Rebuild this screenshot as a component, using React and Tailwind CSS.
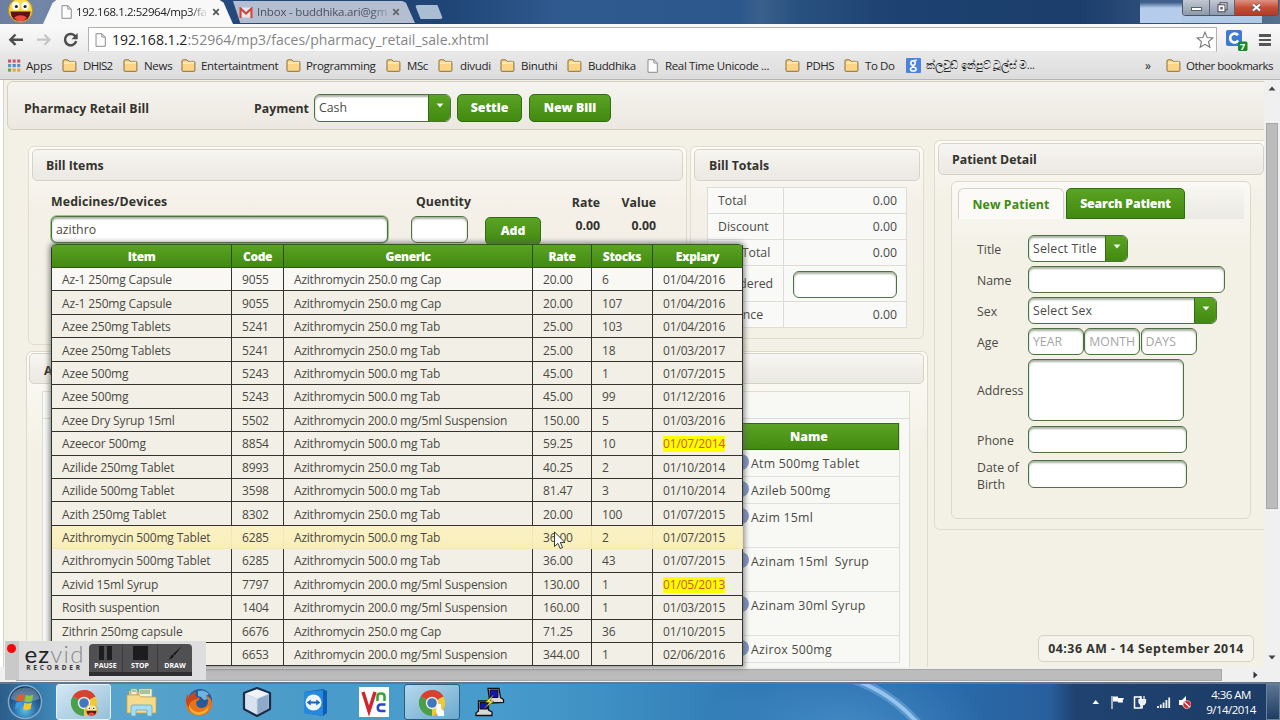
import React from "react";

const GREEN = "bg-gradient-to-b from-[#5ba323] to-[#418a10]";
const PANEL_HEAD = "bg-gradient-to-b from-[#f7f6f2] via-[#f1eee9] to-[#ebe9e3] border border-[#d5d2c6] rounded-[5px]";
const FIELD = "bg-white border border-[#4d7240] rounded-[6px] shadow-[inset_0_2px_2px_rgba(70,85,60,0.45)]";

function Folder() {
  return (
    <svg width="15" height="13" viewBox="0 0 15 13" className="shrink-0">
      <path d="M1 11.5V2Q1 .8 2.2.8h3.6L7.300 2.400h5.400q1.200 0 1.200 1.200v7.900q0 .8-.8.8H1.800Q1 12.300 1 11.500z" fill="#fbd486" stroke="#8a6f3c" />
      <path d="M2 4h11M2 4.200h5l1-1h5" stroke="#fdeec4" strokeWidth="1" fill="none" />
    </svg>
  );
}

function Page({ className = "" }) {
  return (
    <svg width="11" height="14" viewBox="0 0 11 14" className={"shrink-0 " + className}>
      <path d="M1 .7h5.800L10.300 4v9.300H1z" fill="#fdfdfd" stroke="#8c8c8c" />
      <path d="M6.800.7V4h3.500" fill="none" stroke="#8c8c8c" />
    </svg>
  );
}

function Close({ className = "", color = "#666" }) {
  return (
    <svg width="8" height="8" viewBox="0 0 8 8" className={"shrink-0 " + className}><path d="M1.200 1.200l5.600 5.600M6.800 1.200L1.200 6.800" stroke={color} strokeWidth="1.700" /></svg>
  );
}

function Apps() {
  const c = ["#c9566b", "#c9566b", "#c9566b", "#4f9fc4", "#4f86c4", "#5a8fc4", "#6aa843", "#dfa43a", "#dfa43a"];
  return (
    <svg width="14" height="13" viewBox="0 0 14 13" className="shrink-0">
      {c.map((f, i) => <rect key={i} x={1 + (i % 3) * 4.600} y={0.5 + Math.floor(i / 3) * 4.500} width="3.100" height="3.100" fill={f} />)}
    </svg>
  );
}

function GoogleG() {
  return (
    <svg width="15" height="15" viewBox="0 0 15 15" className="shrink-0">
      <rect width="15" height="15" rx="1" fill="#4c83dc" />
      <ellipse cx="7" cy="5" rx="2.200" ry="2.300" fill="none" stroke="#fff" strokeWidth="1.600" />
      <path d="M8.500 2.200h2.500M7.500 7.500q-1.500 1 .3 1.700" fill="none" stroke="#fff" strokeWidth="1.300" />
      <ellipse cx="7.300" cy="11.200" rx="2.800" ry="1.900" fill="none" stroke="#fff" strokeWidth="1.500" />
    </svg>
  );
}

const bookmarks = [
  ["w-[55px]", "ml-[5px]", "Apps", "apps", "tracking-[-0.2px]"],
  ["w-[61px]", "ml-[6px]", "DHIS2", "folder", "tracking-[-0.7px]"],
  ["w-[58px]", "ml-[6px]", "News", "folder", "tracking-[-0.3px]"],
  ["w-[105px]", "ml-[5px]", "Entertaintment", "folder", "tracking-[-0.3px]"],
  ["w-[100px]", "ml-[5px]", "Programming", "folder", "tracking-[-0.35px]"],
  ["w-[52px]", "ml-[6px]", "MSc", "folder", "tracking-[-0.4px]"],
  ["w-[62px]", "ml-[7px]", "divudi", "folder", "tracking-[-0.3px]"],
  ["w-[67px]", "ml-[6px]", "Binuthi", "folder", "tracking-[-0.3px]"],
  ["w-[80px]", "ml-[6px]", "Buddhika", "folder", "tracking-[-0.4px]"],
  ["w-[138px]", "ml-[7px]", "Real Time Unicode ...", "page", "tracking-[-0.35px]"],
  ["w-[59px]", "ml-[6px]", "PDHS", "folder", "tracking-[-0.5px]"],
  ["w-[62px]", "ml-[6px]", "To Do", "folder", "tracking-[-0.4px]"],
  ["w-[150px]", "ml-[5px]", "ක්ලවුඩ් ඉන්පුට් ටූල්ස් ම...", "google", "text-[11px] tracking-[-0.25px]"],
];

function Bookmark({ item }) {
  const [w, ml, label, icon, extra] = item;
  return (
    <div className={"flex shrink-0 items-center whitespace-nowrap " + w}>
      {icon === "apps" && <Apps />}
      {icon === "folder" && <Folder />}
      {icon === "page" && <Page />}
      {icon === "google" && <GoogleG />}
      <span className={ml + " " + extra}>{label}</span>
    </div>
  );
}

function Awesome({ className }) {
  return (
    <svg viewBox="0 0 28 26" className={className}>
      <circle cx="14" cy="11" r="13" fill="#fbd84a" stroke="#b98a1c" />
      <ellipse cx="9" cy="6.500" rx="4" ry="4.500" fill="#fff" />
      <ellipse cx="19" cy="6.500" rx="4" ry="4.500" fill="#fff" />
      <circle cx="9.500" cy="7" r="1.700" fill="#222" />
      <circle cx="19" cy="7" r="1.700" fill="#222" />
      <path d="M3 12.500h22Q24 23 14 23T3 12.500z" fill="#5b1410" />
      <path d="M7 19q7-5 14 0-3 4-7 4t-7-4z" fill="#f04848" />
    </svg>
  );
}

function TitleBar() {
  return (
    <div className="flex h-[24px] shrink-0 items-start bg-[linear-gradient(90deg,#6d7fa0_0px,#7387a8_40px,#26497b_230px,#1f4475_440px,#2f5a90_560px,#2c578c_740px,#3a608c_760px,#28507f_800px,#1d4170_900px,#1b3e6c_1080px,#2c4c78_1140px,#57708f_1280px)]">
      <div className="h-[24px] w-[43px] pl-[7px]"><Awesome className="h-[24px] w-[27px]" /></div>
      <div className="flex h-[24px] w-[190px] items-center bg-[#f8f8f9] pl-[18px] text-[11.500px] text-[#222] [clip-path:polygon(5%_12%,7%_0,93%_0,95%_10%,100%_100%,0_100%)]">
        <Page />
        <span className="ml-[4px] w-[131px] whitespace-nowrap tracking-[-0.42px] [mask-image:linear-gradient(90deg,#000_114px,transparent_132px)]">192.168.1.2:52964/mp3/fac</span>
        <Close className="ml-[5px]" color="#555" />
      </div>
      <div className="mt-[1px] flex h-[22px] w-[182px] items-center bg-[#b3bfd0] pl-[6px] text-[11.500px] text-[#4a515c] [clip-path:polygon(0_0,93%_0,95%_8%,100%_100%,4%_100%)]">
        <svg width="14" height="11" viewBox="0 0 14 11" className="shrink-0"><path d="M.5.5h13v10H.5z" fill="#e8e8ec" /><path d="M1.500 11V1.500L7 6.500l5.500-5V11" fill="none" stroke="#cf4640" strokeWidth="2.200" /></svg>
        <span className="ml-[4px] w-[131px] whitespace-nowrap tracking-[-0.2px] [mask-image:linear-gradient(90deg,#000_114px,transparent_136px)]">Inbox - buddhika.ari@gm</span>
        <Close className="ml-[4px]" />
      </div>
      <div className="mt-[5px] h-[14px] w-[28px] rounded-[3px] bg-[#a9bdd3] [clip-path:polygon(0_0,80%_0,100%_100%,20%_100%)]" />
      <div className="grow" />
      <div className="flex h-[23px] w-[122px] items-start justify-end">
        <div className="h-[23px] w-[42px] bg-gradient-to-b from-[#3f5f8a] from-10% to-[#b5cdeb] to-35%" />
        <div className="h-[23px] w-[80px] bg-[#b0c9e6]">
          <div className="flex h-[16px] w-[97px] overflow-hidden rounded-b-[4px] border border-t-0 border-[#49566a]">
            <div className="flex w-[27px] items-end justify-center border-r border-[#5a6578] bg-gradient-to-b from-[#c3c9d3] to-[#8d98ab] pb-[4px]"><span className="h-[4px] w-[11px] border border-[#566] bg-white" /></div>
            <div className="flex w-[25px] items-center justify-center border-r border-[#5a6578] bg-gradient-to-b from-[#c3c9d3] to-[#8d98ab]">
              <svg width="11" height="11" viewBox="0 0 11 11"><rect x="3" y=".8" width="7" height="7" fill="#eee" stroke="#445" /><rect x="1" y="2.800" width="7" height="7" fill="#fff" stroke="#445" /><rect x="3.300" y="5" width="2.500" height="2.500" fill="#667" /></svg>
            </div>
            <div className="flex grow items-center justify-center bg-gradient-to-b from-[#dd9183] via-[#c64e37] to-[#b53a22]">
              <svg width="11" height="9" viewBox="0 0 11 9"><path d="M2 1.500l7 6M9 1.500l-7 6" stroke="#555" strokeWidth="3.400" /><path d="M2 1.500l7 6M9 1.500l-7 6" stroke="#fff" strokeWidth="2.200" /></svg>
            </div>
          </div>
        </div>
      </div>
      <div className="w-[18px]" />
    </div>
  );
}

function Toolbar() {
  return (
    <div className="flex h-[28px] shrink-0 items-center bg-gradient-to-b from-[#fafafa] to-[#ececed]">
      <svg width="88" height="28" viewBox="0 0 88 28" fill="none" className="shrink-0">
        <path d="M10.500 15.700H23M15.500 10.500l-5.200 5.200 5.200 5.200" stroke="#4d4d4d" strokeWidth="2.400" />
        <path d="M37 15.700h12M44.500 10.700l5 5-5 5" stroke="#c6c6c6" strokeWidth="2.200" />
        <path d="M75.500 12.500a5.700 5.700 0 1 0 .7 4.700" stroke="#4d4d4d" strokeWidth="2.500" />
        <path d="M77.700 9v6.200h-6.200z" fill="#4d4d4d" />
      </svg>
      <div className="mt-[3px] flex h-[25px] w-[1129px] items-center border border-[#b6b0aa] border-b-[#e5e5e5] bg-white pl-[6px] text-[14px] text-[#858585]">
        <Page />
        <span className="ml-[6px] whitespace-nowrap tracking-[0.03px]"><span className="text-[#222]">192.168.1.2</span>:52964/mp3/faces/pharmacy_retail_sale.xhtml</span>
        <svg width="18" height="18" viewBox="0 0 18 18" className="ml-auto mr-[2px]"><path d="M9 1.300l2.200 5.300 5.600.4-4.300 3.700 1.400 5.600L9 13.300l-4.900 3 1.400-5.600L1.200 7l5.600-.4z" fill="#fff" stroke="#777" strokeWidth="1.100" /></svg>
      </div>
      <div className="ml-[9px] mt-[5px] flex h-[22px] w-[24px] items-end">
        <svg width="24" height="22" viewBox="0 0 24 22"><rect x="0" y="0" width="16" height="16" rx="2" fill="#3f7ad0" /><path d="M12 5.300a4.400 4.400 0 1 0 .2 5.200" stroke="#fff" strokeWidth="2.600" fill="none" /><rect x="12" y="11.500" width="9.500" height="9.500" rx="1.500" fill="#1b8a2c" /><text x="14" y="19.600" fontSize="9" fontWeight="700" fill="#fff" fontFamily="Open Sans, sans-serif">7</text></svg>
      </div>
      <div className="ml-[9px] mt-[4px] flex flex-col gap-[2px]">
        <span className="h-[3px] w-[12px] bg-[#555]" /><span className="h-[2px] w-[12px] bg-[#555]" /><span className="h-[3px] w-[12px] bg-[#555]" />
      </div>
    </div>
  );
}

function BookmarksBar() {
  return (
    <div className="flex h-[28px] shrink-0 items-center border-b border-[#b5b5b5] bg-gradient-to-b from-[#e9e9ea] to-[#dcdcdd] pl-[7px] text-[11.500px] text-[#262626]">
      {bookmarks.map((b) => <Bookmark key={b[2]} item={b} />)}
      <span className="ml-auto text-[12px]">»</span>
      <div className="ml-[15px] flex w-[114px] items-center whitespace-nowrap"><Folder /><span className="ml-[5px] tracking-[-0.5px]">Other bookmarks</span></div>
    </div>
  );
}

function Button({ className = "", children }) {
  return <div className={"flex items-center justify-center rounded-[5px] border border-[#2f6d10] font-extrabold text-white " + GREEN + " " + className}>{children}</div>;
}

function Select({ className = "", text }) {
  return (
    <div className={"flex overflow-hidden text-[#4a4a44] " + FIELD + " " + className}>
      <span className="flex grow items-center whitespace-nowrap pl-[4px] pt-[2px]">{text}</span>
      <span className={"flex w-[22px] shrink-0 justify-center border-l border-[#2f6d10] pt-[8px] " + GREEN}>
        <svg width="8" height="5" viewBox="0 0 8 5"><path d="M.5.5h7L4 4.500z" fill="#eef5e6" /></svg>
      </span>
    </div>
  );
}

function BillItems() {
  return (
    <div className="h-[199px] w-[659px] rounded-[6px] border border-[#e0ddcf] bg-gradient-to-b from-[#fcfbf6] via-[#f4f0e8] via-30% to-[#f3f1e6] p-[3px] pt-[2px]">
      <div className={"flex h-[32px] items-center pl-[13px] pt-[3px] font-bold " + PANEL_HEAD}>Bill Items</div>
      <div className="flex pl-[19px]">
        <div className="w-[360px] pt-[12px]">
          <div className="h-[23px] font-bold leading-[18px] tracking-[0.15px]">Medicines/Devices</div>
          <div className={"flex h-[27px] w-[337px] items-center pl-[4px] pt-[2px] text-[#4a4a44] ring-1 ring-[#9ac488] " + FIELD}>azithro</div>
        </div>
        <div className="w-[74px] pt-[12px]">
          <div className="h-[23px] pl-[5px] font-bold leading-[18px] tracking-[0.05px]">Quentity</div>
          <div className={"h-[27px] w-[57px] " + FIELD} />
        </div>
        <div className="w-[56px] pt-[36px]"><Button className="h-[28px] w-[56px] pt-[1px]">Add</Button></div>
        <div className="w-[59px] pt-[13px] text-right font-bold"><div className="h-[23px] leading-[18px]">Rate</div><div className="leading-[18px]">0.00</div></div>
        <div className="w-[56px] pt-[13px] text-right font-bold"><div className="h-[23px] leading-[18px]">Value</div><div className="leading-[18px]">0.00</div></div>
      </div>
    </div>
  );
}

const totals = [
  ["h-[26px]", "Total", "0.00"],
  ["h-[26px]", "Discount", "0.00"],
  ["h-[26px]", "Net Total", "0.00"],
  ["h-[36px]", "Tendered", null],
  ["h-[26px]", "Balance", "0.00"],
];

function BillTotals() {
  return (
    <div className="ml-[3px] h-[193px] w-[234px] rounded-[6px] border border-[#e0ddcf] bg-gradient-to-b from-[#fcfbf6] via-[#f4f0e8] via-30% to-[#f3f1e6] p-[3px] pt-[2px]">
      <div className={"flex h-[32px] items-center pl-[14px] pt-[3px] font-bold " + PANEL_HEAD}>Bill Totals</div>
      <div className="ml-[13px] mt-[6px] w-[200px] border-l border-t border-r border-[#dddcd5] bg-[#f9f9f7] text-[12.300px] text-[#4a4a44]">
        {totals.map(([h, label, v]) => (
          <div key={label} className={"flex border-b border-[#dddcd5] " + h}>
            <div className="flex w-[76px] items-center border-r border-[#dddcd5] pl-[10px] pt-[2px]">{label}</div>
            <div className="flex grow items-center justify-end pr-[9px] pt-[2px]">{v === null ? <div className={"h-[27px] w-[104px] " + FIELD} /> : v}</div>
          </div>
        ))}
      </div>
    </div>
  );
}

const alternatives = [
  ["h-[27px]", "Atm 500mg Tablet"],
  ["h-[27px]", "Azileb 500mg"],
  ["h-[44px]", "Azim 15ml"],
  ["h-[44px]", "Azinam 15ml\u00a0 Syrup"],
  ["h-[44px]", "Azinam 30ml Syrup"],
  ["h-[27px]", "Azirox 500mg"],
];

function Alternatives() {
  return (
    <div className="mt-[6px] h-[330px] w-[902px] rounded-t-[6px] border border-b-0 border-[#dddaca] bg-gradient-to-b from-[#fcfbf6] to-[#f3f1e6] to-30% p-[2px] pt-[1px]">
      <div className={"flex h-[31px] w-[895px] items-center pl-[14px] pt-[5px] font-bold " + PANEL_HEAD}>Alternatives</div>
      <div className="ml-[13px] mt-[7px] h-[300px] w-[868px] border border-[#dddcd5] bg-[#f8f8f5]">
        <div className="h-[27px] border-b border-[#dddcd5]" />
        <div className="ml-[9px] mt-[4px] flex w-[848px] flex-col border-r border-[#dddcd5]">
          <div className={"flex h-[27px] items-center border border-[#2f6d10] pl-[737px] pt-[1px] font-extrabold text-white " + GREEN}>Name</div>
          {alternatives.map(([h, n]) => (
            <div key={n} className={"flex items-start border-b border-[#dfdfdb] pt-[4px] text-[12.300px] leading-[18px] text-[#4a4a44] " + h}>
              <span className="ml-[679px] h-[16px] w-[18px] rounded-full bg-[#7f94c6]" />
              <span className="ml-[2px] mt-[1px] whitespace-nowrap tracking-[0.25px]">{n}</span>
            </div>
          ))}
        </div>
      </div>
    </div>
  );
}

function FormRow({ h, label, children, labelClass = "h-[27px]" }) {
  return (
    <div className={"flex " + h}>
      <div className={"flex w-[51px] shrink-0 items-center pt-[1px] leading-[17px] " + labelClass}>{label}</div>
      {children}
    </div>
  );
}

function Patient() {
  return (
    <div className="mt-[9px] h-[390px] w-[330px] shrink-0 overflow-hidden rounded-l-[6px] border border-r-0 border-[#e0ddcf] bg-gradient-to-b from-[#fcfbf6] to-[#f3f1e6] to-15% pl-[3px] pt-[2px]">
      <div className={"flex h-[32px] w-[326px] items-center pl-[13px] pt-[3px] font-bold " + PANEL_HEAD}>Patient Detail</div>
      <div className="ml-[13px] mt-[6px] h-[338px] w-[300px] rounded-[6px] border border-[#dcd9cc] bg-gradient-to-b from-[#faf9f5] to-[#f3f1e6] to-20% px-[6px] pt-[6px]">
        <div className="flex h-[31px] gap-[2px] bg-gradient-to-b from-[#f7f6f1] to-[#ebe9e4]">
          <div className="flex w-[106px] items-center justify-center rounded-t-[6px] border border-b-0 border-[#d5d2c6] bg-[#fbfaf7] pt-[2px] font-bold tracking-[0.1px] text-[#3f8a12]">New Patient</div>
          <div className={"flex w-[119px] items-center justify-center rounded-t-[5px] border border-[#2f6d10] pt-[2px] font-extrabold tracking-[-0.15px] text-white " + GREEN}>Search Patient</div>
        </div>
        <div className="ml-[19px] mt-[16px] text-[12.300px] text-[#4a4a44]">
          <FormRow h="h-[31px]" label="Title"><Select className="h-[27px] w-[100px] tracking-[0.2px]" text="Select Title" /></FormRow>
          <FormRow h="h-[31px]" label="Name"><div className={"h-[27px] w-[197px] shrink-0 " + FIELD} /></FormRow>
          <FormRow h="h-[31px]" label="Sex"><Select className="h-[27px] w-[189px] tracking-[0.2px]" text="Select Sex" /></FormRow>
          <FormRow h="h-[31px]" label="Age">
            {["YEAR", "MONTH", "DAYS"].map((a) => <div key={a} className={"mr-[0.300px] flex h-[27px] w-[56px] items-center overflow-hidden pl-[4px] pt-[2px] text-[#a5a5a5] " + FIELD}>{a}</div>)}
          </FormRow>
          <FormRow h="h-[67px]" label="Address" labelClass="h-[62px]"><div className={"h-[62px] w-[156px] " + FIELD} /></FormRow>
          <FormRow h="h-[34px]" label="Phone"><div className={"h-[27px] w-[159px] " + FIELD} /></FormRow>
          <FormRow h="h-[31px]" label={<span>Date of Birth</span>} labelClass="h-[30px]"><div className={"h-[28px] w-[159px] " + FIELD} /></FormRow>
        </div>
      </div>
    </div>
  );
}

const rows = [
  ["Az-1 250mg Capsule", "9055", "Azithromycin 250.0 mg Cap", "20.00", "6", "01/04/2016"],
  ["Az-1 250mg Capsule", "9055", "Azithromycin 250.0 mg Cap", "20.00", "107", "01/04/2016"],
  ["Azee 250mg Tablets", "5241", "Azithromycin 250.0 mg Tab", "25.00", "103", "01/04/2016"],
  ["Azee 250mg Tablets", "5241", "Azithromycin 250.0 mg Tab", "25.00", "18", "01/03/2017"],
  ["Azee 500mg", "5243", "Azithromycin 500.0 mg Tab", "45.00", "1", "01/07/2015"],
  ["Azee 500mg", "5243", "Azithromycin 500.0 mg Tab", "45.00", "99", "01/12/2016"],
  ["Azee Dry Syrup 15ml", "5502", "Azithromycin 200.0 mg/5ml Suspension", "150.00", "5", "01/03/2016"],
  ["Azeecor 500mg", "8854", "Azithromycin 500.0 mg Tab", "59.25", "10", "01/07/2014", "expired"],
  ["Azilide 250mg Tablet", "8993", "Azithromycin 250.0 mg Tab", "40.25", "2", "01/10/2014"],
  ["Azilide 500mg Tablet", "3598", "Azithromycin 500.0 mg Tab", "81.47", "3", "01/10/2014"],
  ["Azith 250mg Tablet", "8302", "Azithromycin 250.0 mg Tab", "20.00", "100", "01/07/2015"],
  ["Azithromycin 500mg Tablet", "6285", "Azithromycin 500.0 mg Tab", "36.00", "2", "01/07/2015", "active"],
  ["Azithromycin 500mg Tablet", "6285", "Azithromycin 500.0 mg Tab", "36.00", "43", "01/07/2015"],
  ["Azivid 15ml Syrup", "7797", "Azithromycin 200.0 mg/5ml Suspension", "130.00", "1", "01/05/2013", "expired"],
  ["Rosith suspention", "1404", "Azithromycin 200.0 mg/5ml Suspension", "160.00", "1", "01/03/2015"],
  ["Zithrin 250mg capsule", "6676", "Azithromycin 250.0 mg Cap", "71.25", "36", "01/10/2015"],
  ["", "6653", "Azithromycin 200.0 mg/5ml Suspension", "344.00", "1", "02/06/2016"],
];
const GRID = "grid grid-cols-[180px_52px_249px_59px_61px_90px]";

function Suggestions() {
  return (
    <div className="absolute left-[51px] top-[244px] w-[692px] overflow-visible rounded-t-[5px] border-l border-[#2c3522] shadow-[0_0_5px_2px_rgba(90,90,90,0.65)]">
      <div className={"h-[24px] rounded-t-[5px] border-b border-t border-[#2f5a18] font-bold text-white " + GRID + " " + GREEN}>
        {["Item", "Code", "Generic", "Rate", "Stocks", "Expiary"].map((h) => (
          <div key={h} className="flex items-center justify-center border-r border-[#2a4d17] pt-[2px] text-[12px] font-extrabold tracking-[-0.4px]">{h}</div>
        ))}
      </div>
      {rows.map((r, i) => {
        const active = r[6] === "active";
        return (
          <div key={i} className={"h-[23.450px] text-[12px] text-[#4a4a44] " + GRID + " " + (active ? "bg-gradient-to-b from-[#fbf2c4] to-[#f8eebc]" : i === 0 ? "bg-[#f9f8f4]" : "bg-[#f2f0e6]")}>
            {r.slice(0, 6).map((c, j) => (
              <div key={j} className={"flex items-center whitespace-nowrap border-b border-r pl-[10px] pt-[2px] " + (j === 2 ? "tracking-[-0.21px] " : "tracking-[-0.16px] ") + (active ? "border-[#f5e6ac]" : "border-[#33352c]")}>
                {j === 5 && r[6] === "expired" ? <span className="bg-[#ffff00] leading-[16px] text-[#d9541e]">{c}</span> : c}
              </div>
            ))}
          </div>
        );
      })}
    </div>
  );
}

function Content() {
  return (
    <div className="flex h-[587px] shrink-0 overflow-hidden text-[12.300px] text-[#33332e]">
      <div className="w-[1264px] shrink-0 overflow-hidden bg-white pl-[3px]">
        <div className="h-full border-l border-[#d8d5c8] bg-[#f3f1e5]">
          <div className="ml-[3px] flex pt-[1px]">
            <div className="flex h-[49px] w-[1300px] shrink-0 items-center rounded-l-[6px] border border-[#d3d0c3] bg-gradient-to-b from-[#f5f4ef] via-[#f1eee8] to-[#ece8e1] pl-[16px] pt-[4px] font-bold">
              <span className="w-[230px] pt-[3px] tracking-[0.1px]">Pharmacy Retail Bill</span>
              <span className="w-[60px] pt-[3px]">Payment</span>
              <Select className="h-[28px] w-[137px] font-normal" text="Cash" />
              <Button className="ml-[6px] h-[28px] w-[65px] pt-[2px]">Settle</Button>
              <Button className="ml-[7px] h-[28px] w-[82px] pt-[2px]">New Bill</Button>
            </div>
          </div>
          <div className="flex pl-[22px]">
            <div className="w-[908px] shrink-0 pt-[16px]">
              <div className="flex pl-[2px]"><BillItems /><BillTotals /></div>
              <Alternatives />
            </div>
            <div className="shrink-0 pt-px">
              <Patient />
              <div className="ml-[104px] mt-[105px] flex h-[27px] w-[216px] items-center justify-center rounded-[5px] border border-[#d5d2c6] bg-[#f4f3ec] pt-[2px] font-bold tracking-[0.52px]">04:36 AM - 14 September 2014</div>
            </div>
          </div>
        </div>
      </div>
      <div className="flex w-[16px] flex-col items-center bg-[#f0f0f0] pt-[6px]">
        <svg width="8" height="5" viewBox="0 0 8 5"><path d="M.5 4.500h7L4 .5z" fill="#444" /></svg>
        <div className="mt-[32px] h-[386px] w-[12px] border border-[#a8a8a8] bg-[#bcbcbc]" />
        <svg width="8" height="5" viewBox="0 0 8 5" className="mt-[146px]"><path d="M.5.5h7L4 4.500z" fill="#444" /></svg>
      </div>
    </div>
  );
}

function Recorder() {
  return (
    <div className="absolute left-[5px] top-[641px] flex h-[39px] w-[201px] bg-[#dedede]">
      <div className="w-[14px] bg-[#c9c9c9] pl-[2px] pt-[3px]"><span className="block h-[9px] w-[9px] rounded-full bg-[#f60808]" /></div>
      <div className="flex w-[70px] flex-col items-center pl-[1px] pt-[3px]">
        <div className="font-['Lato',sans-serif] text-[24px] leading-[19px] tracking-[1.200px] text-[#222]">ez<span className="font-light text-[#8a8a8a]">vid</span></div>
        <div className="mt-[1px] text-[6.500px] font-bold leading-[8px] tracking-[2.800px] text-[#333]">RECORDER</div>
      </div>
      <div className="mt-[3px] flex h-[32px] w-[103px] rounded-t-[4px] border-b-[4px] border-[#2f2f31] bg-[#505052] text-[7px] font-bold text-white">
        <div className="flex w-[34px] flex-col items-center border-r border-[#3d3d3f] pt-[2px]"><div className="flex gap-[3px]"><span className="h-[14px] w-[5px] bg-[#1d1d1f]" /><span className="h-[14px] w-[5px] bg-[#1d1d1f]" /></div><span className="mt-[2px] leading-[8px]">PAUSE</span></div>
        <div className="flex w-[35px] flex-col items-center border-r border-[#3d3d3f] pt-[2px]"><span className="h-[14px] w-[15px] bg-[#1d1d1f]" /><span className="mt-[2px] leading-[8px]">STOP</span></div>
        <div className="flex w-[34px] flex-col items-center pt-[2px]"><svg width="18" height="14" viewBox="0 0 15 14"><path d="M14.500 0L5.500 8l1.500 1.500zM5 8.500L6.500 10Q4 13.500.5 13.500 3.500 12 3 10z" fill="#161616" /></svg><span className="mt-[2px] leading-[8px]">DRAW</span></div>
      </div>
    </div>
  );
}

function ChromeLogo({ size = 26 }) {
  return (
    <svg width={size} height={size} viewBox="0 0 26 26">
      <path d="M13 13L1.740 6.500A13 13 0 0 1 24.260 6.500z" fill="#d9412f" />
      <path d="M13 13L24.260 6.500A13 13 0 0 1 13 26z" fill="#f3c835" />
      <path d="M13 13V26A13 13 0 0 1 1.740 6.500z" fill="#4a9f4a" />
      <path d="M13 7h11.600A13 13 0 0 0 13 0z" fill="#d9412f" />
      <path d="M7.800 16L2 6.200A13 13 0 0 0 0 13z" fill="#4a9f4a" />
      <circle cx="13" cy="13" r="6.200" fill="#f2f2f2" />
      <circle cx="13" cy="13" r="4.800" fill="#4077bd" />
    </svg>
  );
}

function Start() {
  return (
    <svg width="36" height="36" viewBox="0 0 36 36">
      <defs><radialGradient id="orb" cx="50%" cy="75%" r="70%"><stop offset="0" stopColor="#58c0e8" /><stop offset=".5" stopColor="#2a6ba5" /><stop offset="1" stopColor="#16395f" /></radialGradient></defs>
      <circle cx="18" cy="18" r="16.500" fill="url(#orb)" stroke="#86a9c6" strokeWidth="1.500" />
      <path d="M3.500 15Q6 4 18 3.500T32.500 15Q18 20 3.500 15z" fill="#fff" opacity=".25" />
      <path d="M10.500 11.500q3.500-2.500 7-1l-1.200 6.500q-3.500-1.300-7 .6z" fill="#ea5a2a" />
      <path d="M18.700 11q3.500 1.500 7.500-.3L25 17.300q-3.800 1.700-7.500.1z" fill="#8dc63f" />
      <path d="M9 19q3.500-2 7-.6l-1.200 6.300q-3.300-1.400-6.800.5z" fill="#3f9ae0" />
      <path d="M17.300 18.800q3.700 1.500 7.500-.2l-1.300 6.300q-3.700 2-7.400.2z" fill="#fbc52c" />
    </svg>
  );
}

function Explorer() {
  return (
    <svg width="31" height="29" viewBox="0 0 31 29">
      <path d="M3 3h8l2 2h13v20H3z" fill="#e9c566" />
      <path d="M5 1h6v6H5zM13 1h13v8H13z" fill="#f3efe0" stroke="#9fae7b" strokeWidth=".7" />
      <path d="M6 3h4M14 3h10M14 5h10" stroke="#5a9a55" />
      <path d="M1 7h12l2 2h15v16H1z" fill="#f6db8c" stroke="#c9a64c" strokeWidth=".8" />
      <path d="M5 28v-9q0-2 2-2h17q2 0 2 2v9h-5v-6H10v6z" fill="#a9dcf2" stroke="#5ca9cd" strokeWidth=".8" />
    </svg>
  );
}

function Firefox() {
  return (
    <svg width="28" height="28" viewBox="0 0 28 28">
      <circle cx="15" cy="13" r="12" fill="#255a9b" />
      <path d="M13 3q6-2 11 3l-3 2 2 3-4 1-3-3-3-1z" fill="#6fb3e0" />
      <path d="M3 6q0 3 1 4 2-5 7-6-2 3 0 5 3 0 4 2l-4 3q0 6 6 6 6-1 6-7 0-3-2-6 6 3 6 9-1 11-13 11.500Q1.500 27 .8 15 .7 9 3 6z" fill="#e8731d" />
      <path d="M3 13q1 9 9 11 7 1 12-6-1 8-10 9Q3 26 3 13z" fill="#f6b22b" />
      <path d="M3 6q0 3 1 4 2-5 7-6-2 3 0 5 2 0 3 1L7 13q-4 3-3 7-4-5-3-9 1-4 2-5z" fill="#c9451b" />
    </svg>
  );
}

function Cube() {
  return (
    <svg width="30" height="30" viewBox="0 0 30 30">
      <path d="M15 1l13 5v16l-13 7-13-7V6z" fill="#c9d8e8" stroke="#1b2c48" strokeWidth="2.200" strokeLinejoin="round" />
      <path d="M15 2.500L26.500 6.500 15 11.500 3.500 6.500z" fill="#eff4f9" />
      <path d="M3.500 7.500L14.500 12v15L3.500 21.500z" fill="#d9e2ee" />
      <path d="M26.500 7.500L15.500 12v15l11-5.500z" fill="#8ea9ca" />
    </svg>
  );
}

function TeamViewer() {
  return (
    <svg width="25" height="29" viewBox="0 0 25 29">
      <path d="M1 4L20 1l4 2v22l-4 3L1 25z" fill="#0f5eb5" />
      <path d="M1 4l19-2v26L1 25z" fill="#2589dd" />
      <circle cx="10.500" cy="14.500" r="8" fill="#eef6fd" />
      <path d="M3.700 14.500l4-3v2h5.600v-2l4 3-4 3v-2H7.700v2z" fill="#1767bb" />
    </svg>
  );
}

function Vnc() {
  return (
    <svg width="30" height="30" viewBox="0 0 30 30">
      <rect width="30" height="30" fill="#fdfdfd" />
      <path d="M4 5l6 19L16 5" stroke="#d0252c" strokeWidth="3.400" fill="none" />
      <path d="M18.500 14V9.500q0-3 3-3h1q3 0 3 3V14" stroke="#3aa537" strokeWidth="2.600" fill="none" />
      <path d="M26.500 17.500h-4.500q-3.200 0-3.200 3.300t3.200 3.200h4.500" stroke="#2b45c8" strokeWidth="2.600" fill="none" />
    </svg>
  );
}

function Putty() {
  return (
    <svg width="30" height="30" viewBox="0 0 30 30">
      <path d="M13 1.500h11l1.500 9 3 2v3l-12 .5-2-3z" fill="#d8d8d8" stroke="#111" strokeWidth="1.300" />
      <path d="M15 3h8v7.500h-8z" fill="#1414b4" stroke="#111" />
      <path d="M3.500 14h10v9l3.500 2v3.500H1V26l2.500-2z" fill="#d8d8d8" stroke="#111" strokeWidth="1.300" />
      <path d="M5 15.500h7.500V22H5z" fill="#1414b4" stroke="#111" />
      <path d="M18.500 8l-8 7 4 .5-5 5.500 9.500-6.500-4-.7z" fill="#f7f126" stroke="#5a5710" strokeWidth=".6" />
    </svg>
  );
}

function Taskbar() {
  return (
    <div className="flex h-[38px] shrink-0 items-center border-t-2 border-[#63788f] bg-[linear-gradient(90deg,#2b5d8a_0px,#3d84b4_50px,#57a3cc_110px,#4b9bc9_300px,#469ccc_500px,#3f90c4_600px,#2f77b3_760px,#2a6bab_950px,#285f9c_1050px,#1f4270_1075px,#1d3c66_1280px)]">
      <div className="ml-[7px] w-[49px]"><Start /></div>
      <div className="flex h-[36px] w-[55px] items-center justify-center rounded-[3px] border border-[#e6f2fa] bg-gradient-to-br from-[#d5e8f4] to-[#96c0da]">
        <div className="relative pt-[1px]"><ChromeLogo /><Awesome className="absolute bottom-[-1px] right-[-1px] h-[12px] w-[13px]" /></div>
      </div>
      <div className="ml-[15px] w-[59px]"><Explorer /></div>
      <div className="w-[57px]"><Firefox /></div>
      <div className="w-[61px]"><Cube /></div>
      <div className="w-[56px]"><TeamViewer /></div>
      <div className="w-[45px]"><Vnc /></div>
      <div className="flex h-[36px] w-[56px] items-center justify-center rounded-[3px] border border-[#2c5d80] bg-gradient-to-br from-[#b5d8eb] to-[#69a9cf]">
        <div className="relative pt-[1px]"><ChromeLogo /><svg width="11" height="13" viewBox="0 0 11 13" className="absolute bottom-[-1px] right-0"><path d="M3 0h4v5l3 2v5H2V7z" fill="#fff" /><path d="M0 12l2-4 2 4z" fill="#e9a722" /></svg></div>
      </div>
      <div className="ml-[15px]"><Putty /></div>
      <div className="h-full min-w-0 grow overflow-hidden bg-[radial-gradient(ellipse_140px_60px_at_340px_40px,rgba(90,165,220,0.45),transparent)] pl-[335px]">
        <svg width="100" height="36" viewBox="0 0 100 36"><path d="M8 -6Q50 6 82 44" stroke="#7fb6e6" strokeWidth="9" fill="none" opacity=".45" /><path d="M8 -6Q50 6 82 44" stroke="#a5d0f4" strokeWidth="4" fill="none" opacity=".8" /></svg>
      </div>
      <svg width="100" height="20" viewBox="0 0 100 20" className="shrink-0">
        <path d="M1.500 12h6.500L4.700 8z" fill="#fff" />
        <path d="M21 4v13" stroke="#dde" strokeWidth="1.400" /><path d="M22 4.500h5v1.500h6l-1.500 3 .8 1.500H27V9.500h-5z" fill="#fff" />
        <path d="M43.500 5h6.500v11h-6.500z" fill="#24466f" stroke="#fff" strokeWidth="1.500" /><path d="M48 7.500h6.500v3q-1 2.500-3.200 2.500T48 10.500zM49.500 4v3M53 4v3M51.300 13v3.500" stroke="#fff" strokeWidth="1.200" fill="#e8eef5" />
        <path d="M67 16v-2M69.800 16v-3.500M72.600 16v-5.500M75.400 16V8M78.200 16V5.500" stroke="#f0f4f8" strokeWidth="1.800" />
        <path d="M88 8h3l4-4v13l-4-4h-3z" fill="#fff" /><circle cx="96" cy="12.500" r="4" fill="#d3232b" stroke="#fff" strokeWidth=".5" /><path d="M93.500 10.300l5 4.600" stroke="#fff" strokeWidth="1.300" />
      </svg>
      <div className="ml-[11px] w-[58px] shrink-0 text-center text-[11.500px] leading-[15.500px] tracking-[-0.55px] text-white"><div>4:36 AM</div><div>9/14/2014</div></div>
      <div className="ml-[6px] h-[36px] w-[14px] shrink-0 border border-[#6a829e] bg-gradient-to-b from-[#5d7592] to-[#1f3c63]" />
    </div>
  );
}

export default function App() {
  return (
    <div className="relative flex h-[720px] w-[1280px] flex-col overflow-hidden bg-[#f3f1e5] font-['Open_Sans','Noto_Sans',sans-serif]">
      <TitleBar />
      <Toolbar />
      <BookmarksBar />
      <Content />
      <div className="flex h-[15px] shrink-0 items-center bg-[#f0f0f0] pt-px">
        <div className="ml-[16px] h-[12px] w-[1206px] border border-[#a8a8a8] bg-[#bcbcbc]" />
        <svg width="5" height="8" viewBox="0 0 5 8" className="ml-[31px]"><path d="M.5.5v7L4.500 4z" fill="#333" /></svg>
      </div>
      <Taskbar />
      <Suggestions />
      <Recorder />
      <svg width="13" height="19" viewBox="0 0 13 19" className="absolute left-[553px] top-[531px]"><path d="M1.500 1v14.500l3.400-3.200 2.300 5.200 2.400-1-2.300-5.100h4.700z" fill="#fff" stroke="#333" /></svg>
    </div>
  );
}
